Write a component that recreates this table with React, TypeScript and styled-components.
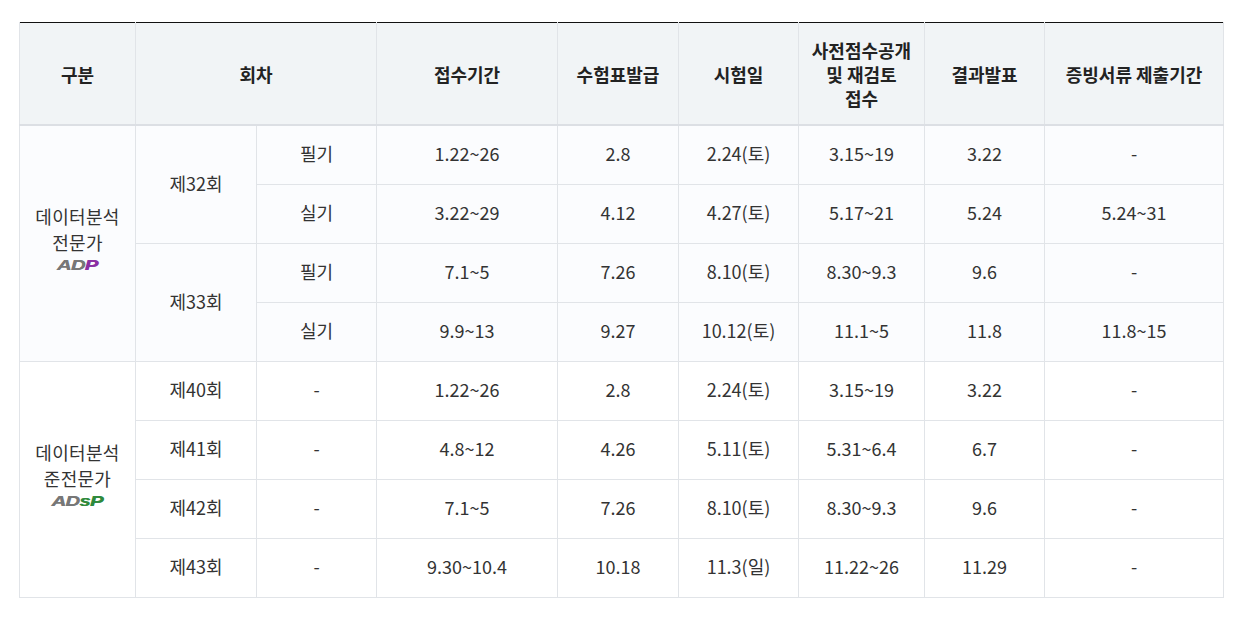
import React from 'react'
import styled, { createGlobalStyle } from 'styled-components'

const GlobalStyle = createGlobalStyle`
  body {
    margin: 0;
    background: #fff;
    font-family: "Noto Sans CJK KR", "Noto Sans", sans-serif;
  }
`

const Wrap = styled.div`
  padding: 22px 15px 0 19px;
`

const Table = styled.table`
  width: 1204px;
  border-collapse: collapse;
  table-layout: fixed;
  border-top: 1px solid #111;
  font-size: 18px;
  color: #333;
`

const Th = styled.th`
  height: 101px;
  padding: 0 4px;
  background: #f1f4f6;
  border: 1px solid #e1e4e8;
  border-top: none;
  border-bottom: 2px solid #dcdfe4;
  font-weight: 700;
  color: #222;
  line-height: 24px;
  text-align: center;
  vertical-align: middle;
`

const Row = styled.tr<{ $tint?: boolean }>`
  background: ${({ $tint }) => ($tint ? '#fbfcfe' : '#fff')};
`

const Td = styled.td`
  box-sizing: border-box;
  height: 59px;
  padding: 0 4px 3px;
  border: 1px solid #e1e4e8;
  text-align: center;
  vertical-align: middle;
  line-height: 24px;
  font-weight: 400;
`

const Category = styled.div`
  display: flex;
  flex-direction: column;
  align-items: center;
  padding-bottom: 9px;
  line-height: 26px;
  color: #333;
  letter-spacing: 0.3px;
`

const Logo = styled.span`
  display: inline-block;
  margin-top: 3px;
  font-family: "Liberation Sans", Arial, sans-serif;
  font-weight: 900;
  font-style: italic;
  font-size: 15px;
  line-height: 14px;
  letter-spacing: -0.5px;
  color: #777;
  transform: scaleX(1.35);
  text-shadow: 0.4px 0 0 currentColor;
`

const Accent = styled.span<{ $color: string }>`
  color: ${({ $color }) => $color};
`

type Exam = {
  round: string
  sub?: string
  apply: string
  ticket: string
  date: string
  review: string
  result: string
  docs: string
}

const adp: Exam[] = [
  { round: '제32회', sub: '필기', apply: '1.22~26', ticket: '2.8', date: '2.24(토)', review: '3.15~19', result: '3.22', docs: '-' },
  { round: '제32회', sub: '실기', apply: '3.22~29', ticket: '4.12', date: '4.27(토)', review: '5.17~21', result: '5.24', docs: '5.24~31' },
  { round: '제33회', sub: '필기', apply: '7.1~5', ticket: '7.26', date: '8.10(토)', review: '8.30~9.3', result: '9.6', docs: '-' },
  { round: '제33회', sub: '실기', apply: '9.9~13', ticket: '9.27', date: '10.12(토)', review: '11.1~5', result: '11.8', docs: '11.8~15' },
]

const adsp: Exam[] = [
  { round: '제40회', apply: '1.22~26', ticket: '2.8', date: '2.24(토)', review: '3.15~19', result: '3.22', docs: '-' },
  { round: '제41회', apply: '4.8~12', ticket: '4.26', date: '5.11(토)', review: '5.31~6.4', result: '6.7', docs: '-' },
  { round: '제42회', apply: '7.1~5', ticket: '7.26', date: '8.10(토)', review: '8.30~9.3', result: '9.6', docs: '-' },
  { round: '제43회', apply: '9.30~10.4', ticket: '10.18', date: '11.3(일)', review: '11.22~26', result: '11.29', docs: '-' },
]

const widths = [116, 121, 120, 181, 121, 120, 126, 120, 179]

const Rest = ({ e }: { e: Exam }) => (
  <>
    <Td>{e.apply}</Td>
    <Td>{e.ticket}</Td>
    <Td>{e.date}</Td>
    <Td>{e.review}</Td>
    <Td>{e.result}</Td>
    <Td>{e.docs}</Td>
  </>
)

export default function App() {
  return (
    <>
      <GlobalStyle />
      <Wrap>
        <Table>
          <colgroup>
            {widths.map((w, i) => (
              <col key={i} style={{ width: w }} />
            ))}
          </colgroup>
          <thead>
            <tr>
              <Th>구분</Th>
              <Th colSpan={2}>회차</Th>
              <Th>접수기간</Th>
              <Th>수험표발급</Th>
              <Th>시험일</Th>
              <Th>
                사전점수공개
                <br />및 재검토
                <br />
                접수
              </Th>
              <Th>결과발표</Th>
              <Th>증빙서류 제출기간</Th>
            </tr>
          </thead>
          <tbody>
            {adp.map((e, i) => (
              <Row $tint key={`adp${i}`}>
                {i === 0 && (
                  <Td rowSpan={4}>
                    <Category>
                      데이터분석
                      <br />
                      전문가
                      <Logo>
                        AD<Accent $color="#8b2fa3">P</Accent>
                      </Logo>
                    </Category>
                  </Td>
                )}
                {i % 2 === 0 && <Td rowSpan={2}>{e.round}</Td>}
                <Td>{e.sub}</Td>
                <Rest e={e} />
              </Row>
            ))}
            {adsp.map((e, i) => (
              <Row key={`adsp${i}`}>
                {i === 0 && (
                  <Td rowSpan={4}>
                    <Category>
                      데이터분석
                      <br />
                      준전문가
                      <Logo>
                        AD<Accent $color="#2f8a3c">sP</Accent>
                      </Logo>
                    </Category>
                  </Td>
                )}
                <Td>{e.round}</Td>
                <Td>-</Td>
                <Rest e={e} />
              </Row>
            ))}
          </tbody>
        </Table>
      </Wrap>
    </>
  )
}
